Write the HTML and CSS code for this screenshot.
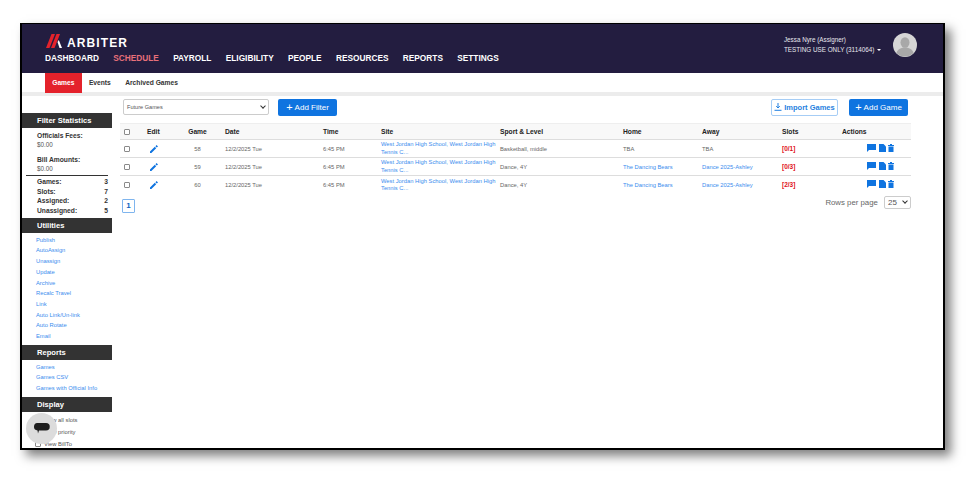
FILE: index.html
```html
<html>

<head>
<title>Schedule</title>
<link rel="stylesheet" href="styles.css">
</head>

<body>

<div id="frame">

<div id="header">
	<div id="header-left">
		<div id="logo">
			<svg width="21" height="14" viewBox="0 0 21 14">
				<polygon points="0,14 5.500,0 9,0 3.500,14" fill="#e4222b"/>
				<polygon points="5,14 10.500,0 14,0 8.500,14" fill="#e4222b"/>
				<polygon points="11.500,8 12.800,6 16,14 13.500,14" fill="#ffffff"/>
			</svg>
			<span id="logo-text">ARBITER</span>
		</div>
		<div id="nav">
			<span class="nav-item">DASHBOARD</span>
			<span class="nav-item nav-active">SCHEDULE</span>
			<span class="nav-item">PAYROLL</span>
			<span class="nav-item">ELIGIBILITY</span>
			<span class="nav-item">PEOPLE</span>
			<span class="nav-item">RESOURCES</span>
			<span class="nav-item">REPORTS</span>
			<span class="nav-item">SETTINGS</span>
		</div>
	</div>
	<div id="user">
		<div id="user-text">
			<div>Jessa Nyre (Assigner)</div>
			<div>TESTING USE ONLY (3114064) <span class="caret"></span></div>
		</div>
		<svg id="avatar" width="24" height="24" viewBox="0 0 24 24">
			<circle cx="12" cy="12" r="12" fill="#d6d6d6"/>
			<ellipse cx="12" cy="9.500" rx="4.500" ry="5.200" fill="#a8a8a8"/>
			<path d="M3.500 20c1-4 5-5.500 8.500-5.500s7.500 1.500 8.500 5.500a12 12 0 0 1-17 0z" fill="#a8a8a8"/>
		</svg>
	</div>
</div>

<div id="subnav">
	<span class="tab tab-active">Games</span>
	<span class="tab">Events</span>
	<span class="tab">Archived Games</span>
</div>
<div id="strip"></div>

<div id="content">

	<div id="sidebar">
		<div class="side-title side-first">Filter Statistics</div>
		<div class="fee">
			<div class="fee-label">Officials Fees:</div>
			<div class="fee-value">$0.00</div>
		</div>
		<div class="fee">
			<div class="fee-label">Bill Amounts:</div>
			<div class="fee-value">$0.00</div>
		</div>
		<div id="counts">
			<div class="count"><span>Games:</span><span>3</span></div>
			<div class="count"><span>Slots:</span><span>7</span></div>
			<div class="count"><span>Assigned:</span><span>2</span></div>
			<div class="count"><span>Unassigned:</span><span>5</span></div>
		</div>
		<div class="side-title">Utilities</div>
		<div class="side-links">
			<a>Publish</a>
			<a>AutoAssign</a>
			<a>Unassign</a>
			<a>Update</a>
			<a>Archive</a>
			<a>Recalc Travel</a>
			<a>Link</a>
			<a>Auto Link/Un-link</a>
			<a>Auto Rotate</a>
			<a>Email</a>
		</div>
		<div class="side-title">Reports</div>
		<div class="side-links">
			<a>Games</a>
			<a>Games CSV</a>
			<a>Games with Official Info</a>
		</div>
		<div class="side-title">Display</div>
		<div class="side-checks">
			<label><span class="check"></span>View all slots</label>
			<label><span class="check"></span>View priority</label>
			<label><span class="check"></span>View BillTo</label>
		</div>
	</div>

	<div id="main">
		<div id="toolbar">
			<div class="select filter-select">Future Games<span class="select-arrow"></span></div>
			<span class="btn btn-blue add-filter"><span class="plus">+</span> Add Filter</span>
			<span class="toolbar-space"></span>
			<span class="btn btn-outline">
				<svg width="8" height="8" viewBox="0 0 8 8"><path d="M4 0v5M2.200 3.200L4 5l1.800-1.800M.5 7.300h7" fill="none" stroke="#1f7fe0" stroke-width="1"/></svg>
				Import Games
			</span>
			<span class="btn btn-blue add-game"><span class="plus">+</span> Add Game</span>
		</div>

		<table id="games">
			<tr class="head">
				<th class="c-check"><span class="check"></span></th>
				<th class="c-edit">Edit</th>
				<th class="c-game">Game</th>
				<th class="c-date">Date</th>
				<th class="c-time">Time</th>
				<th class="c-site">Site</th>
				<th class="c-sport">Sport &amp; Level</th>
				<th class="c-home">Home</th>
				<th class="c-away">Away</th>
				<th class="c-slots">Slots</th>
				<th class="c-actions">Actions</th>
			</tr>
			<tr>
				<td class="c-check"><span class="check"></span></td>
				<td class="c-edit"><svg class="pencil" viewBox="0 0 8 8"><path d="M0 8V6.600L4.800 1.800l1.400 1.400L1.400 8zM5.400 1.200L6.600 0 8 1.400 6.800 2.600z"/></svg></td>
				<td class="c-game">58</td>
				<td class="c-date">12/2/2025 Tue</td>
				<td>6:45 PM</td>
				<td class="link site">West Jordan High School, West Jordan High Tennis C...</td>
				<td>Basketball, middle</td>
				<td>TBA</td>
				<td>TBA</td>
				<td class="slots">[0/1]</td>
				<td class="actions">
					<svg class="act" width="9" height="8" viewBox="0 0 9 8"><path d="M0 0h9v6H2L0 8z"/></svg>
					<svg class="act" width="7" height="8" viewBox="0 0 7 8"><path d="M0 0h4.500L7 2.500V8H0z"/></svg>
					<svg class="act" width="6" height="8" viewBox="0 0 6 8"><path d="M0 1h2V0h2v1h2v1H0zM.5 2.500h5V8h-5z"/></svg>
				</td>
			</tr>
			<tr>
				<td class="c-check"><span class="check"></span></td>
				<td class="c-edit"><svg class="pencil" viewBox="0 0 8 8"><path d="M0 8V6.600L4.800 1.800l1.400 1.400L1.400 8zM5.400 1.200L6.600 0 8 1.400 6.800 2.600z"/></svg></td>
				<td class="c-game">59</td>
				<td class="c-date">12/2/2025 Tue</td>
				<td>6:45 PM</td>
				<td class="link site">West Jordan High School, West Jordan High Tennis C...</td>
				<td>Dance, 4Y</td>
				<td class="link">The Dancing Bears</td>
				<td class="link">Dance 2025-Ashley</td>
				<td class="slots">[0/3]</td>
				<td class="actions">
					<svg class="act" width="9" height="8" viewBox="0 0 9 8"><path d="M0 0h9v6H2L0 8z"/></svg>
					<svg class="act" width="7" height="8" viewBox="0 0 7 8"><path d="M0 0h4.500L7 2.500V8H0z"/></svg>
					<svg class="act" width="6" height="8" viewBox="0 0 6 8"><path d="M0 1h2V0h2v1h2v1H0zM.5 2.500h5V8h-5z"/></svg>
				</td>
			</tr>
			<tr>
				<td class="c-check"><span class="check"></span></td>
				<td class="c-edit"><svg class="pencil" viewBox="0 0 8 8"><path d="M0 8V6.600L4.800 1.800l1.400 1.400L1.400 8zM5.400 1.200L6.600 0 8 1.400 6.800 2.600z"/></svg></td>
				<td class="c-game">60</td>
				<td class="c-date">12/2/2025 Tue</td>
				<td>6:45 PM</td>
				<td class="link site">West Jordan High School, West Jordan High Tennis C...</td>
				<td>Dance, 4Y</td>
				<td class="link">The Dancing Bears</td>
				<td class="link">Dance 2025-Ashley</td>
				<td class="slots">[2/3]</td>
				<td class="actions">
					<svg class="act" width="9" height="8" viewBox="0 0 9 8"><path d="M0 0h9v6H2L0 8z"/></svg>
					<svg class="act" width="7" height="8" viewBox="0 0 7 8"><path d="M0 0h4.500L7 2.500V8H0z"/></svg>
					<svg class="act" width="6" height="8" viewBox="0 0 6 8"><path d="M0 1h2V0h2v1h2v1H0zM.5 2.500h5V8h-5z"/></svg>
				</td>
			</tr>
		</table>

		<div id="pager">
			<span class="page-no">1</span>
			<span id="rows-per-page">Rows per page <span class="select rows-select">25<span class="select-arrow"></span></span></span>
		</div>
	</div>

</div>

<div id="chat">
	<svg width="16" height="12" viewBox="0 0 16 12"><path d="M4 0h8a3.500 3.500 0 0 1 0 7.500H5L4 10.500 3.500 7.500A3.700 3.700 0 0 1 4 0z" fill="#1e1e1e"/></svg>
</div>

</div>

</body>

</html>
```

FILE: styles.css
```css
html, body {
	margin: 0;
	padding: 0;
	background-color: white;
}

body {
	font-family: "Liberation Sans", Arial, sans-serif;
	height: 480px;
	overflow: hidden;
}

#frame {
	position: relative;
	width: 921px;
	height: 424px;
	margin: 23px 0 0 20px;
	border: solid black;
	border-width: 1px 2px 2px 2px;
	background-color: white;
	overflow: hidden;
	box-shadow: 6px 6px 10px rgba(0, 0, 0, 0.5);
}

#header {
	display: flex;
	justify-content: space-between;
	height: 49px;
	background-color: #231d40;
	color: white;
}

#header-left {
	padding: 9px 0 0 23px;
}

#logo {
	display: flex;
	align-items: center;
	height: 16px;
	padding-left: 1px;
}

#logo-text {
	font-size: 12px;
	font-weight: bold;
	letter-spacing: 1.100px;
	transform: translateY(1.500px);
}

#nav {
	display: flex;
	gap: 14.300px;
	margin-top: 4px;
}

.nav-item {
	font-size: 8.300px;
	font-weight: bold;
	line-height: 11px;
}

.nav-active {
	color: #e8707a;
}

#user {
	display: flex;
	padding: 9px 26px 0 0;
}

#user-text {
	font-size: 6.300px;
	line-height: 9.500px;
	color: #e8e8ee;
	margin-top: 2px;
}

.caret {
	display: inline-block;
	margin-left: 1px;
	vertical-align: middle;
	border-top: 2px solid white;
	border-left: 2px solid transparent;
	border-right: 2px solid transparent;
}

#avatar {
	margin-left: 12px;
}

#subnav {
	display: flex;
	align-items: center;
	height: 19px;
	padding-left: 23px;
}

.tab {
	font-size: 6.700px;
	font-weight: bold;
	color: #333;
	padding: 0 7.200px;
	line-height: 20px;
}

.tab-active {
	background-color: #e4222b;
	color: white;
}

#strip {
	height: 4px;
	background-color: #ececec;
}

#content {
	display: flex;
}

#sidebar {
	flex: none;
	width: 90px;
	padding-top: 17px;
}

.side-title {
	height: 15px;
	line-height: 15px;
	padding-left: 15px;
	margin-top: 2px;
	background-color: #333333;
	color: white;
	font-size: 7.600px;
	font-weight: bold;
}

.side-first {
	margin-top: 0;
}

.fee {
	padding: 3px 0 0 15px;
	font-size: 6.700px;
	line-height: 9px;
}

.fee + .fee {
	padding-top: 6px;
}

.fee-label {
	font-weight: bold;
	color: #333;
}

.fee-value {
	color: #555;
	font-size: 6.300px;
}

#counts {
	margin: 2px 4px 0 4px;
	padding: 1px 0 0 11px;
	border-top: 1px solid #333;
}

.count {
	display: flex;
	justify-content: space-between;
	font-size: 6.700px;
	font-weight: bold;
	line-height: 9.700px;
	color: #333;
}

.side-links {
	display: flex;
	flex-direction: column;
	padding: 2px 0 1px 14px;
}

.side-links a {
	font-size: 5.800px;
	line-height: 10.670px;
	color: #3a8cee;
}

.side-checks {
	display: flex;
	flex-direction: column;
	padding: 2px 0 0 13px;
}

.side-checks label {
	display: flex;
	align-items: center;
	gap: 3px;
	height: 12px;
	font-size: 5.800px;
	color: #555;
}

.check {
	display: inline-block;
	box-sizing: border-box;
	width: 6px;
	height: 6px;
	border: 1px solid #8a8a8a;
	border-radius: 1px;
	background-color: white;
}

#main {
	flex: 1;
	padding: 3px 33px 0 8px;
	min-width: 0;
}

#toolbar {
	display: flex;
	align-items: center;
	height: 16px;
	padding: 0 2px 0 3px;
}

.select {
	position: relative;
	display: inline-block;
	box-sizing: border-box;
	border: 1px solid #ccc;
	border-radius: 2px;
	background-color: white;
	color: #555;
}

.select-arrow {
	position: absolute;
	right: 3px;
	top: 50%;
	width: 3px;
	height: 3px;
	margin-top: -3px;
	border: solid #333;
	border-width: 0 1px 1px 0;
	transform: rotate(45deg);
}

.filter-select {
	width: 146px;
	height: 16px;
	line-height: 14px;
	padding-left: 3px;
	font-size: 5.600px;
}

.btn {
	display: inline-flex;
	align-items: center;
	justify-content: center;
	box-sizing: border-box;
	height: 17px;
	font-size: 8px;
	border-radius: 2px;
}

.btn-blue {
	background-color: #0f74e0;
	color: white;
}

.plus {
	font-size: 11px;
	line-height: 11px;
	margin-right: 2px;
}

.add-filter {
	width: 59px;
	margin-left: 9px;
}

.toolbar-space {
	flex: 1;
}

.btn-outline {
	width: 67px;
	gap: 2px;
	border: 1px solid #a6cdf5;
	color: #1f7fe0;
	font-weight: bold;
	font-size: 7.500px;
}

.add-game {
	width: 59px;
	margin-left: 11px;
}

#games {
	width: 791px;
	margin-top: 8px;
	border-collapse: collapse;
	table-layout: fixed;
}

#games th, #games td {
	box-sizing: border-box;
	padding: 0;
}

#games th {
	height: 16px;
	background-color: #f8f8f8;
	border-top: 1px solid #eeeeee;
	border-bottom: 1px solid #dddddd;
	font-size: 6.700px;
	color: #222;
	text-align: left;
}

#games td {
	height: 18px;
	border-bottom: 1px solid #dddddd;
	font-size: 5.800px;
	color: #666;
}

#games tr:last-child td {
	border-bottom: 0;
}

#games .c-check {
	width: 27px;
	padding-left: 4px;
}

#games .c-edit {
	width: 38px;
}

#games td.c-edit {
	padding-left: 3px;
}

#games .c-game {
	width: 25px;
	text-align: center;
}

#games .c-date {
	width: 113px;
	padding-left: 15px;
}

.c-time {
	width: 58px;
}

.c-site {
	width: 119px;
}

.c-sport {
	width: 123px;
}

.c-home {
	width: 79px;
}

.c-away {
	width: 80px;
}

.c-slots {
	width: 60px;
}

.c-actions {
	width: 69px;
}

.pencil {
	display: block;
	width: 8px;
	height: 8px;
	fill: #0f74e0;
}

#games td.link {
	color: #3a8cee;
}

#games td.site {
	line-height: 7.200px;
	padding-right: 2px;
}

#games td.slots {
	color: #e01020;
	font-weight: bold;
	font-size: 6.500px;
}

#games td.actions {
	padding-left: 25px;
	white-space: nowrap;
}

.act {
	fill: #0f74e0;
	margin-right: 1px;
}

#pager {
	display: flex;
	justify-content: space-between;
	align-items: flex-start;
	width: 791px;
	box-sizing: border-box;
	padding-left: 2px;
}

.page-no {
	box-sizing: border-box;
	width: 13px;
	height: 14px;
	margin-top: 5px;
	border: 1px solid #7fb5ee;
	border-radius: 1px;
	color: #0f5fc0;
	font-size: 8px;
	font-weight: bold;
	line-height: 12px;
	text-align: center;
}

#rows-per-page {
	margin-top: 2px;
	font-size: 7.800px;
	color: #666;
}

.rows-select {
	width: 27px;
	height: 13px;
	margin-left: 4px;
	padding-left: 3px;
	font-size: 8px;
	line-height: 11px;
	vertical-align: middle;
}

#chat {
	position: absolute;
	left: 4px;
	top: 389px;
	display: flex;
	align-items: center;
	justify-content: center;
	width: 31px;
	height: 31px;
	border-radius: 50%;
	background-color: #dcdcdc;
}
```
